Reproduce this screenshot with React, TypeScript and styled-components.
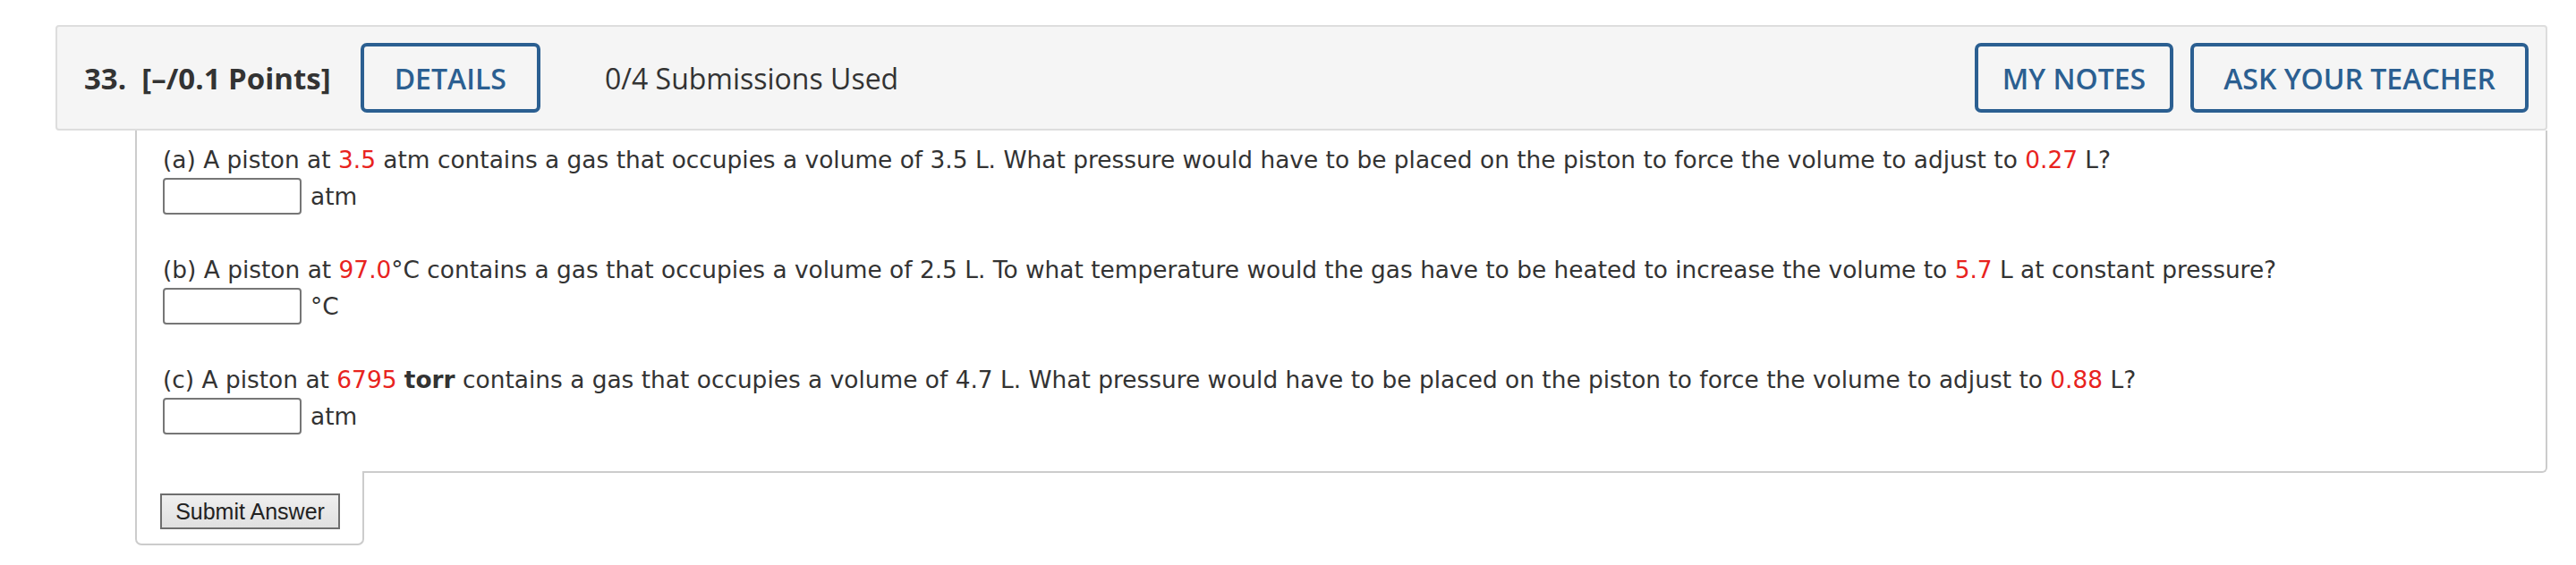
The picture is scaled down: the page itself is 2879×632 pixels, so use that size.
import React from 'react';
import styled, { createGlobalStyle } from 'styled-components';

const GlobalStyle = createGlobalStyle`
  html, body {
    margin: 0;
    padding: 0;
    background: #fff;
  }
`;

const Page = styled.div`
  padding: 28px 32px 0 62px;
  width: 2785px;
`;

const Header = styled.div`
  display: flex;
  align-items: center;
  background-color: #f5f5f5;
  border: 2px solid #dddddd;
  border-radius: 4px;
  padding: 18px 19px 18px 30px;
  font-family: 'Open Sans', sans-serif;
  color: #333;
`;

const QuestionTitle = styled.span`
  font-size: 33px;
  font-weight: 700;
  margin-right: 33px;
  white-space: pre;
`;

const OutlineButton = styled.button`
  font-family: 'Open Sans', sans-serif;
  font-size: 32px;
  font-weight: 600;
  color: #2b5f91;
  background: transparent;
  border: 4px solid #2b5f91;
  border-radius: 7px;
  height: 78px;
  padding: 0 ${(p: { $pad?: number }) => p.$pad ?? 33}px;
  cursor: pointer;
`;

const Submissions = styled.span`
  font-size: 32px;
  margin-left: 72px;
  flex: 1;
`;

const ButtonGroup = styled.div`
  display: flex;
  gap: 19px;
`;

const Body = styled.div`
  border: 2px solid #cccccc;
  border-top: none;
  border-bottom-right-radius: 6px;
  margin-left: 89px;
  padding: 15px 29px 41px 29px;
  font-family: 'DejaVu Sans', Verdana, sans-serif;
  font-size: 26.4px;
  color: #333;
  display: flex;
  flex-direction: column;
  gap: 44px;
`;

const Part = styled.div`
  display: flex;
  flex-direction: column;
  gap: 2px;
`;

const Prompt = styled.div`
  line-height: 36px;
  white-space: nowrap;
`;

const Given = styled.span`
  color: #e8231e;
`;

const AnswerRow = styled.div`
  display: flex;
  align-items: center;
  gap: 10px;
`;

const AnswerInput = styled.input`
  width: 155px;
  height: 41px;
  box-sizing: border-box;
  border: 2px solid #767676;
  border-radius: 4px;
  background: #fff;
`;

const Unit = styled.span`
  line-height: 41px;
`;

const SubmitArea = styled.div`
  position: relative;
  margin-left: 89px;
  margin-top: -2px;
  width: 256px;
  box-sizing: border-box;
  background: #fff;
  border: 2px solid #cccccc;
  border-top: none;
  border-radius: 0 0 7px 7px;
  padding: 25px 0 16px 26px;
`;

const SubmitButton = styled.button`
  font-family: 'Liberation Sans', Arial, sans-serif;
  font-size: 25px;
  color: #222;
  width: 201px;
  height: 40px;
  border: 2px solid #6e6e6e;
  background: linear-gradient(#efefef, #e0e0e0);
  padding: 0;
  display: block;
`;

type PartData = {
  label: string;
  start: string;
  startUnit: React.ReactNode;
  volume: string;
  action: string;
  target: string;
  tail: string;
  unit: string;
};

const parts: PartData[] = [
  {
    label: '(a)',
    start: '3.5',
    startUnit: ' atm',
    volume: '3.5',
    action: 'What pressure would have to be placed on the piston to force the volume to adjust to',
    target: '0.27',
    tail: ' L?',
    unit: 'atm',
  },
  {
    label: '(b)',
    start: '97.0',
    startUnit: '°C',
    volume: '2.5',
    action: 'To what temperature would the gas have to be heated to increase the volume to',
    target: '5.7',
    tail: ' L at constant pressure?',
    unit: '°C',
  },
  {
    label: '(c)',
    start: '6795',
    startUnit: (
      <>
        {' '}
        <b>torr</b>
      </>
    ),
    volume: '4.7',
    action: 'What pressure would have to be placed on the piston to force the volume to adjust to',
    target: '0.88',
    tail: ' L?',
    unit: 'atm',
  },
];

export default function App() {
  return (
    <>
      <GlobalStyle />
      <Page>
        <Header>
          <QuestionTitle>33.  [–/0.1 Points]</QuestionTitle>
          <OutlineButton $pad={34}>DETAILS</OutlineButton>
          <Submissions>0/4 Submissions Used</Submissions>
          <ButtonGroup>
            <OutlineButton $pad={27}>MY NOTES</OutlineButton>
            <OutlineButton $pad={33}>ASK YOUR TEACHER</OutlineButton>
          </ButtonGroup>
        </Header>
        <Body>
          {parts.map((p) => (
            <Part key={p.label}>
              <Prompt>
                {p.label} A piston at <Given>{p.start}</Given>
                {p.startUnit} contains a gas that occupies a volume of {p.volume} L. {p.action}{' '}
                <Given>{p.target}</Given>
                {p.tail}
              </Prompt>
              <AnswerRow>
                <AnswerInput type="text" />
                <Unit>{p.unit}</Unit>
              </AnswerRow>
            </Part>
          ))}
        </Body>
        <SubmitArea>
          <SubmitButton>Submit Answer</SubmitButton>
        </SubmitArea>
      </Page>
    </>
  );
}
